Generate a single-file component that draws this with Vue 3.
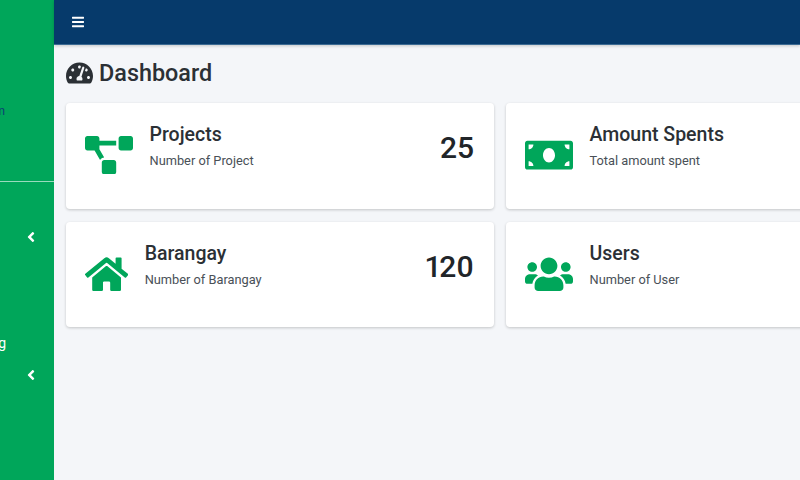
<script setup>
const bars = 'M16 132h416c8.837 0 16-7.163 16-16V76c0-8.837-7.163-16-16-16H16C7.163 60 0 67.163 0 76v40c0 8.837 7.163 16 16 16zm0 160h416c8.837 0 16-7.163 16-16v-40c0-8.837-7.163-16-16-16H16c-8.837 0-16 7.163-16 16v40c0 8.837 7.163 16 16 16zm0 160h416c8.837 0 16-7.163 16-16v-40c0-8.837-7.163-16-16-16H16c-8.837 0-16 7.163-16 16v40c0 8.837 7.163 16 16 16z'
const gauge = 'M288 32C128.94 32 0 160.94 0 320c0 52.8 14.25 102.26 39.06 144.8 5.61 9.62 16.3 15.2 27.44 15.2h443c11.14 0 21.83-5.58 27.44-15.2C561.75 422.26 576 372.8 576 320c0-159.06-128.94-288-288-288zm0 64c14.71 0 26.58 10.13 30.32 23.65-1.11 2.26-2.64 4.23-3.45 6.67l-9.22 27.67c-5.13 3.49-10.97 6.01-17.64 6.01-17.67 0-32-14.33-32-32S270.33 96 288 96zM96 384c-17.67 0-32-14.33-32-32s14.33-32 32-32 32 14.33 32 32-14.33 32-32 32zm48-160c-17.67 0-32-14.33-32-32s14.33-32 32-32 32 14.33 32 32-14.33 32-32 32zm246.77-72.41l-61.33 184C343.13 347.33 352 364.54 352 384c0 11.72-3.38 22.55-8.88 32H232.88c-5.5-9.45-8.88-20.28-8.88-32 0-33.94 26.5-61.43 59.9-63.59l61.34-184.01c4.17-12.56 17.73-19.45 30.36-15.17 12.57 4.19 19.35 17.79 15.17 30.36zm14.66 57.2l15.52-46.55c3.47-1.29 7.13-2.23 11.05-2.23 17.67 0 32 14.33 32 32s-14.33 32-32 32c-11.38-.01-20.89-6.28-26.57-15.22zM480 384c-17.67 0-32-14.33-32-32s14.33-32 32-32 32 14.33 32 32-14.33 32-32 32z'
const angle = 'M31.7 239l136-136c9.4-9.4 24.6-9.4 33.9 0l22.6 22.6c9.4 9.4 9.4 24.6 0 33.9L127.9 256l96.4 96.4c9.4 9.4 9.4 24.6 0 33.9L201.7 409c-9.4 9.4-24.6 9.4-33.9 0l-136-136c-9.5-9.4-9.5-24.6-.1-34z'

const cards = [
  {
    title: 'Projects',
    sub: 'Number of Project',
    value: '25',
    w: 640,
    path: 'M384 320H256c-17.67 0-32 14.33-32 32v128c0 17.67 14.33 32 32 32h128c17.67 0 32-14.33 32-32V352c0-17.67-14.33-32-32-32zM192 32c0-17.67-14.33-32-32-32H32C14.33 0 0 14.33 0 32v128c0 17.67 14.33 32 32 32h95.72l73.16 128.04C211.98 300.98 232.4 288 256 288h.28L192 175.51V128h224V64H192V32zM608 0H480c-17.67 0-32 14.33-32 32v128c0 17.67 14.33 32 32 32h128c17.67 0 32-14.33 32-32V32c0-17.67-14.33-32-32-32z'
  },
  {
    title: 'Amount Spents',
    sub: 'Total amount spent',
    value: '',
    w: 640,
    path: 'M608 64H32C14.33 64 0 78.33 0 96v320c0 17.67 14.33 32 32 32h576c17.67 0 32-14.33 32-32V96c0-17.67-14.33-32-32-32zM48 400v-64c35.35 0 64 28.65 64 64H48zm0-224v-64h64c0 35.35-28.65 64-64 64zm272 176c-44.19 0-80-42.99-80-96 0-53.02 35.82-96 80-96s80 42.98 80 96c0 53.03-35.83 96-80 96zm272 48h-64c0-35.35 28.65-64 64-64v64zm0-224c-35.35 0-64-28.65-64-64h64v64z'
  },
  {
    title: 'Barangay',
    sub: 'Number of Barangay',
    value: '120',
    w: 576,
    path: 'M280.37 148.26L96 300.11V464a16 16 0 0 0 16 16l112.06-.29a16 16 0 0 0 15.92-16V368a16 16 0 0 1 16-16h64a16 16 0 0 1 16 16v95.64a16 16 0 0 0 16 16.05L464 480a16 16 0 0 0 16-16V300L295.67 148.26a12.19 12.19 0 0 0-15.3 0zM571.6 251.47L488 182.56V44.05a12 12 0 0 0-12-12h-56a12 12 0 0 0-12 12v72.61L318.47 43a48 48 0 0 0-61 0L4.34 251.47a12 12 0 0 0-1.6 16.9l25.5 31A12 12 0 0 0 45.15 301l235.22-193.74a12.19 12.19 0 0 1 15.3 0L530.9 301a12 12 0 0 0 16.9-1.6l25.5-31a12 12 0 0 0-1.7-16.93z'
  },
  {
    title: 'Users',
    sub: 'Number of User',
    value: '',
    w: 640,
    path: 'M96 224c35.3 0 64-28.7 64-64s-28.7-64-64-64-64 28.7-64 64 28.7 64 64 64zm448 0c35.3 0 64-28.7 64-64s-28.7-64-64-64-64 28.7-64 64 28.7 64 64 64zm32 32h-64c-17.6 0-33.5 7.1-45.1 18.6 40.3 22.1 68.9 62 75.1 109.4h66c17.7 0 32-14.3 32-32v-32c0-35.3-28.7-64-64-64zm-256 0c61.9 0 112-50.1 112-112S381.9 32 320 32 208 82.1 208 144s50.1 112 112 112zm76.8 32h-8.3c-20.8 10-43.9 16-68.5 16s-47.6-6-68.5-16h-8.3C179.6 288 128 339.6 128 403.2V432c0 26.5 21.5 48 48 48h288c26.5 0 48-21.5 48-48v-28.8c0-63.6-51.6-115.2-115.2-115.2zm-223.7-13.4C161.5 263.1 145.6 256 128 256H64c-35.3 0-64 28.7-64 64v32c0 17.7 14.3 32 32 32h65.9c6.3-47.4 34.9-87.3 75.2-109.4z'
  }
]
</script>
<template>
  <div class="wrap">
    <aside class="sidebar">
      <div class="side-inner">
        <div class="brand">System</div>
        <div class="divider"></div>
        <div class="menu first">
          <svg class="angle" viewBox="0 0 256 512"><path :d="angle" /></svg>
        </div>
        <div class="label">Monitoring</div>
        <div class="menu second">
          <svg class="angle" viewBox="0 0 256 512"><path :d="angle" /></svg>
        </div>
      </div>
    </aside>
    <div class="main">
      <header class="navbar">
        <svg class="bars" viewBox="0 0 448 512"><path :d="bars" /></svg>
      </header>
      <section class="content">
        <h1 class="heading">
          <svg class="gauge" viewBox="0 0 576 512"><path :d="gauge" /></svg>
          Dashboard
        </h1>
        <div class="grid">
          <div v-for="c in cards" :key="c.title" class="card">
            <svg class="icon" :viewBox="`0 0 ${c.w} 512`" :style="{ width: (c.w * 38.4) / 512 + 'px' }">
              <path :d="c.path" />
            </svg>
            <div class="text">
              <h5>{{ c.title }}</h5>
              <p>{{ c.sub }}</p>
            </div>
            <div class="value">{{ c.value }}</div>
          </div>
        </div>
      </section>
    </div>
  </div>
</template>
<style>
html, body {
  margin: 0;
  overflow: hidden;
}
</style>
<style scoped>
.wrap {
  display: flex;
  width: 800px;
  height: 480px;
  overflow: hidden;
  background: #f4f6f9;
  font-family: Roboto, "Noto Sans", sans-serif;
  color: #212529;
}
.sidebar {
  width: 54px;
  flex: none;
  overflow: hidden;
  background: #00a65a;
}
.side-inner {
  width: 250px;
  margin-left: -196px;
  color: #fff;
}
.brand {
  height: 181px;
  box-sizing: border-box;
  padding-top: 103px;
  padding-right: 49px;
  text-align: right;
  font-size: 12px;
  line-height: 16px;
  color: #0b3f73;
}
.divider {
  height: 1px;
  background: rgba(255, 255, 255, 0.6);
}
.menu {
  display: flex;
  align-items: center;
  justify-content: flex-end;
  height: 20px;
  padding-right: 19px;
}
.first {
  margin-top: 45px;
}
.label {
  margin-top: 86px;
  height: 20px;
  padding-right: 48px;
  text-align: right;
  font-size: 14px;
  line-height: 20px;
}
.second {
  margin-top: 12px;
}
.angle {
  width: 8px;
  height: 16px;
  fill: #fff;
}
.main {
  flex: 1;
  min-width: 0;
}
.navbar {
  height: 44px;
  display: flex;
  align-items: center;
  padding-left: 18px;
  background: #063a6b;
  border-bottom: 1px solid #3b6a93;
  box-shadow: 0 1px 3px rgba(0, 0, 0, 0.2);
}
.bars {
  width: 12px;
  height: 14px;
  fill: #fff;
}
.content {
  padding: 12px 12px 0;
}
.heading {
  display: flex;
  align-items: center;
  gap: 6px;
  margin: 0 0 13px;
  height: 33px;
  font-size: 23.4px;
  font-weight: 500;
  line-height: 33px;
  white-space: nowrap;
  color: #2b3035;
}
.gauge {
  width: 27px;
  height: 24px;
  margin-top: -1px;
  fill: #2b3035;
}
.grid {
  display: grid;
  grid-template-columns: 428px 428px;
  gap: 13px 12px;
}
.card {
  display: flex;
  align-items: flex-start;
  height: 105.5px;
  box-sizing: border-box;
  padding: 19px 20px 0 19px;
  background: #fff;
  border-radius: 4px;
  box-shadow: 0 1px 3px rgba(0, 0, 0, 0.2);
}
.icon {
  height: 38.4px;
  margin-top: 14px;
  flex: none;
  fill: #00a65a;
}
.text {
  flex: 1;
  margin-left: 16.5px;
}
h5 {
  margin: 0 0 4px;
  font-size: 19.5px;
  font-weight: 500;
  line-height: 26px;
  color: #2b3035;
}
p {
  margin: 0;
  font-size: 12.8px;
  line-height: 18px;
  color: #495057;
}
.value {
  margin-top: 6px;
  font-size: 30px;
  font-weight: 500;
  line-height: 40px;
  font-feature-settings: "pnum";
}
</style>
